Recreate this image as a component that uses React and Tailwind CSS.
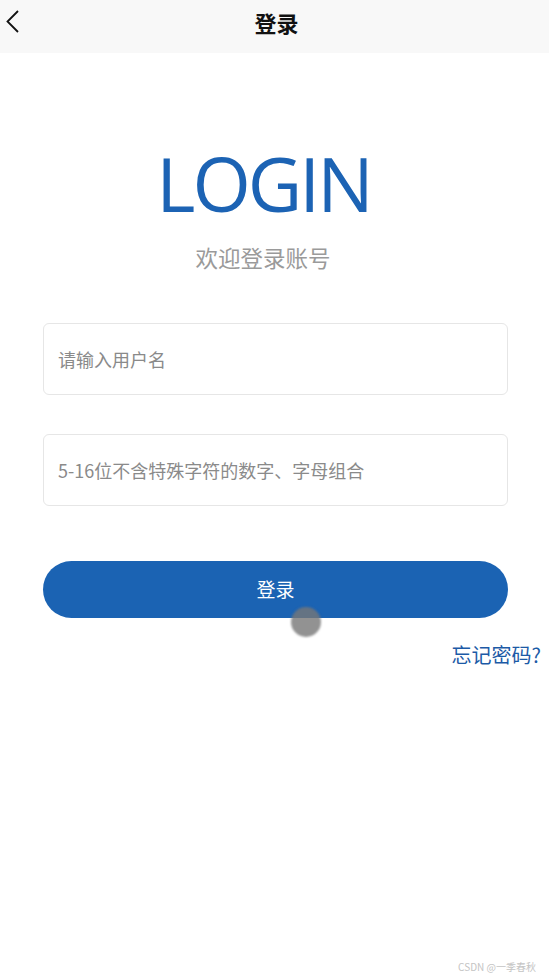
import { useState } from 'react';

const CJK = { fontFamily: '"Noto Sans CJK SC", "Noto Sans", sans-serif' };

function Header() {
  return (
    <div className="relative flex h-[53px] items-center justify-center bg-[#f8f8f8] pb-[9px]">
      <button className="absolute left-[4px] top-[9px] p-0">
        <svg width="18" height="26" viewBox="0 0 18 26" fill="none">
          <path d="M14 2 L3.5 12.5 L14 23" stroke="#111" strokeWidth="1.8" />
        </svg>
      </button>
      <h1 className="ml-[4px] text-[22px] font-bold text-[#111]" style={CJK}>登录</h1>
    </div>
  );
}

export default function App() {
  const [user, setUser] = useState('');
  const [pwd, setPwd] = useState('');

  return (
    <div className="relative h-[979px] w-[549px] overflow-hidden bg-white" style={CJK}>
      <Header />

      <div className="flex flex-col items-center">
        <div
          className="mt-[83px] mr-[22px] text-[75px] leading-[94px] tracking-[-3px] text-[#1c63b4]"
          style={{ fontFamily: '"Open Sans", "Noto Sans", sans-serif' }}
        >
          LOGIN
        </div>
        <div className="mt-[12px] mr-[23px] text-[22.5px] leading-[30px] text-[#9a9a9a]">欢迎登录账号</div>
      </div>

      <div className="mt-[51px] flex flex-col gap-[39px] px-[43px] pr-[41px]">
        <input
          value={user}
          onChange={(e) => setUser(e.target.value)}
          placeholder="请输入用户名"
          className="h-[72px] rounded-[6px] border border-[#e6e6e6] px-[14px] text-[18px] outline-none placeholder:text-[#8a8a8a]"
        />
        <input
          type="password"
          value={pwd}
          onChange={(e) => setPwd(e.target.value)}
          placeholder="5-16位不含特殊字符的数字、字母组合"
          className="h-[72px] rounded-[6px] border border-[#e6e6e6] px-[14px] text-[18px] outline-none placeholder:text-[#8a8a8a]"
        />
      </div>

      <div className="mt-[55px] px-[43px] pr-[41px]">
        <button className="h-[57px] w-full rounded-full bg-[#1b63b3] text-[19px] text-white">登录</button>
      </div>

      <div className="mt-[22px] flex justify-end pr-[8px]">
        <a className="text-[20px] text-[#1c5aa6]">忘记密码?</a>
      </div>

      {/* touch cursor */}
      <div className="absolute left-[291px] top-[607px] h-[30px] w-[30px] rounded-full bg-[#777]/80 blur-[1px]" />

      <div className="absolute bottom-[5px] right-[13px] text-[10px] text-[#c4c4c4]">CSDN @一季春秋</div>
    </div>
  );
}
